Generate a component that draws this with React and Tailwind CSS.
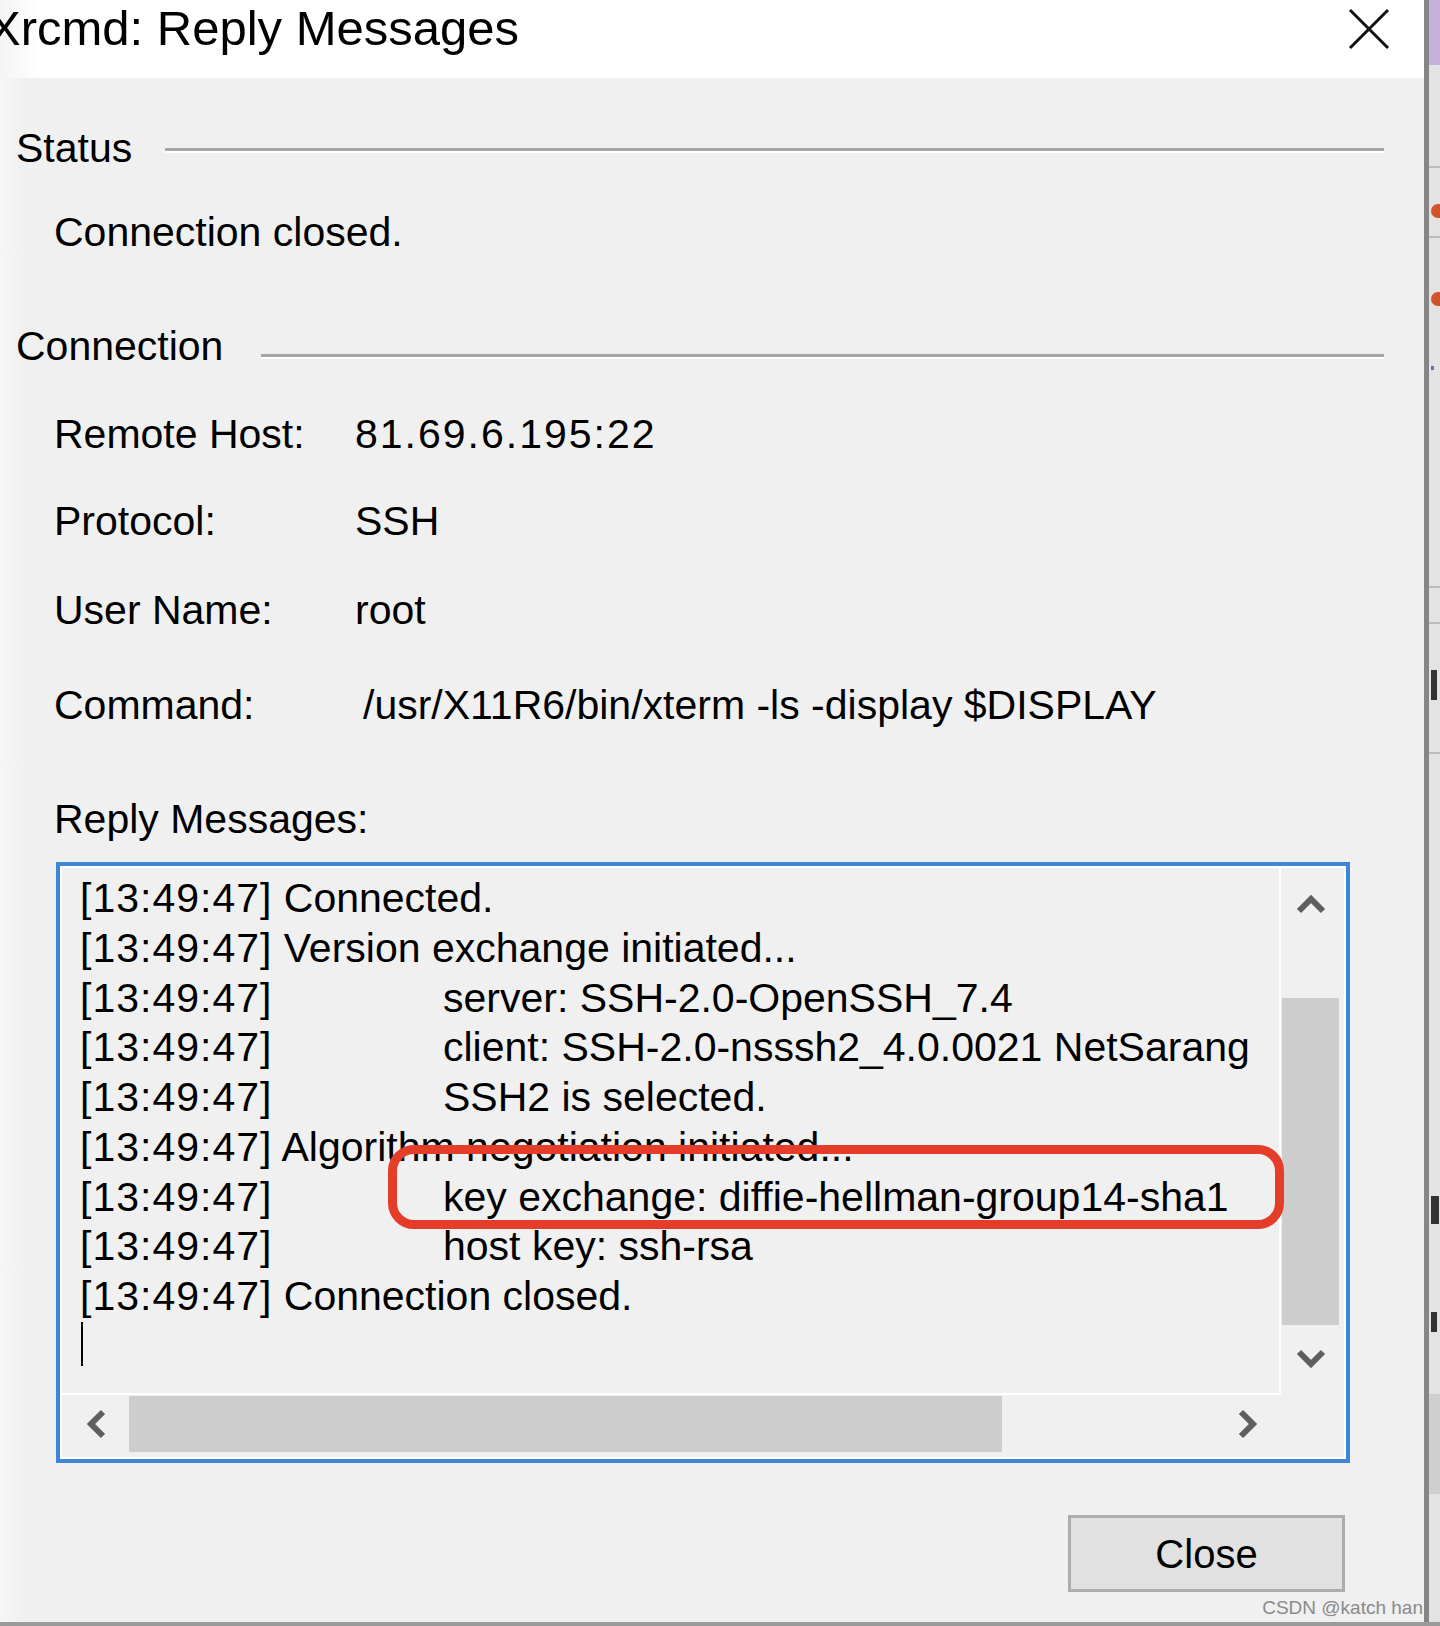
import React from "react";

const lines = [
  [false, "Connected."],
  [false, "Version exchange initiated..."],
  [true, "server: SSH-2.0-OpenSSH_7.4"],
  [true, "client: SSH-2.0-nsssh2_4.0.0021 NetSarang"],
  [true, "SSH2 is selected."],
  [false, "Algorithm negotiation initiated..."],
  [true, "key exchange: diffie-hellman-group14-sha1"],
  [true, "host key: ssh-rsa"],
  [false, "Connection closed."],
];

function Chevron({ dir }) {
  if (dir === "up")
    return (
      <svg width="30" height="24" viewBox="0 0 30 24">
        <path d="M3 20 L15 8 L27 20" fill="none" stroke="#5f5f5f" strokeWidth="6" />
      </svg>
    );
  if (dir === "down")
    return (
      <svg width="30" height="24" viewBox="0 0 30 24">
        <path d="M3 4 L15 16 L27 4" fill="none" stroke="#5f5f5f" strokeWidth="6" />
      </svg>
    );
  if (dir === "left")
    return (
      <svg width="26" height="30" viewBox="0 0 26 30">
        <path d="M20 3 L8 15 L20 27" fill="none" stroke="#5f5f5f" strokeWidth="6" />
      </svg>
    );
  return (
    <svg width="26" height="30" viewBox="0 0 26 30">
      <path d="M6 3 L18 15 L6 27" fill="none" stroke="#5f5f5f" strokeWidth="6" />
    </svg>
  );
}

export default function App() {
  return (
    <div className="relative flex h-[1626px] w-[1440px] overflow-hidden bg-[#9a9a9a] font-['Liberation_Sans',Arial,sans-serif] text-black">
      {/* Dialog */}
      <div className="flex h-[1622px] w-[1424px] flex-col">
        {/* Title bar */}
        <div className="flex h-[78px] shrink-0 items-start justify-between bg-[linear-gradient(to_right,#f4f4f4_0px,#ffffff_40px)]">
          <div className="ml-[-12px] whitespace-nowrap text-[49px] leading-[56px]">Xrcmd: Reply Messages</div>
          <div className="mr-[34px] mt-[8px]">
            <svg width="42" height="42" viewBox="0 0 42 42">
              <path d="M2 2 L40 40 M40 2 L2 40" stroke="#111111" strokeWidth="3" fill="none" />
            </svg>
          </div>
        </div>

        {/* Body */}
        <div className="flex flex-1 flex-col bg-[linear-gradient(to_right,#f6f6f6_0px,#f0f0f0_24px)] text-[41px] leading-[40px]">
          {/* Status header */}
          <div className="mt-[50px] flex h-[40px] items-center pl-[16px]">
            <span>Status</span>
            <div className="mr-[40px] ml-[33px] mt-[4px] flex-1 border-t-[3px] border-b-2 border-t-[#a6a6a6] border-b-white" />
          </div>
          <div className="mt-[44px] flex h-[40px] items-center pl-[54px]">Connection closed.</div>

          {/* Connection header */}
          <div className="mt-[74px] flex h-[40px] items-center pl-[16px]">
            <span>Connection</span>
            <div className="mr-[40px] ml-[38px] mt-[20px] flex-1 border-t-[3px] border-b-2 border-t-[#a6a6a6] border-b-white" />
          </div>

          <div className="mt-[48px] flex h-[40px] items-center pl-[54px]">
            <span className="w-[301px]">Remote Host:</span>
            <span className="tracking-[2px]">81.69.6.195:22</span>
          </div>
          <div className="mt-[47px] flex h-[40px] items-center pl-[54px]">
            <span className="w-[301px]">Protocol:</span>
            <span>SSH</span>
          </div>
          <div className="mt-[49px] flex h-[40px] items-center pl-[54px]">
            <span className="w-[301px]">User Name:</span>
            <span>root</span>
          </div>
          <div className="mt-[55px] flex h-[40px] items-center pl-[54px]">
            <span className="w-[309px]">Command:</span>
            <span className="whitespace-nowrap">/usr/X11R6/bin/xterm -ls -display $DISPLAY</span>
          </div>

          <div className="mt-[74px] flex h-[40px] items-center pl-[54px]">Reply Messages:</div>

          {/* Log box */}
          <div className="relative ml-[56px] mt-[23px] h-[601px] w-[1294px] border-4 border-[#3f86d6] bg-white p-[2px]">
            <div className="grid h-full w-full grid-cols-[1219px_1fr] grid-rows-[527px_1fr] bg-[#f0f0f0]">
              {/* text area */}
              <div className="overflow-hidden border-r-2 border-b-2 border-white pl-[18px] pt-[6px] text-[41px] leading-[49.75px]">
                {lines.map(([indent, text], i) => (
                  <div key={i} className="whitespace-nowrap">
                    {indent ? (
                      <>
                        <span className="inline-block w-[363px] tracking-[1px]">[13:49:47]</span>
                        <span>{text}</span>
                      </>
                    ) : (
                      <>
                        <span className="tracking-[1px]">[13:49:47]</span>
                        <span>{" " + text}</span>
                      </>
                    )}
                  </div>
                ))}
                <div className="ml-[1px] h-[44px] w-[2px] bg-black" />
              </div>

              {/* vertical scrollbar */}
              <div className="flex flex-col">
                <div className="flex h-[70px] items-center justify-center pr-[4px]">
                  <Chevron dir="up" />
                </div>
                <div className="h-[60px]" />
                <div className="ml-[1px] mr-[5px] h-[327px] bg-[#cdcdcd]" />
                <div className="flex h-[70px] items-center justify-center pr-[4px]">
                  <Chevron dir="down" />
                </div>
              </div>

              {/* horizontal scrollbar */}
              <div className="flex items-start pt-[1px]">
                <div className="flex h-[56px] w-[67px] items-center justify-center">
                  <Chevron dir="left" />
                </div>
                <div className="h-[56px] w-[873px] bg-[#cdcdcd]" />
                <div className="flex-1" />
                <div className="flex h-[56px] w-[67px] items-center justify-center">
                  <Chevron dir="right" />
                </div>
              </div>
              <div />
            </div>

            {/* red annotation */}
            <div className="absolute left-[328px] top-[279px] h-[84px] w-[896px] rounded-[26px] border-[9px] border-[#e43d2a]" />
          </div>

          {/* Close button */}
          <div className="mr-[79px] mt-[52px] flex h-[77px] w-[277px] items-center justify-center self-end border-[3px] border-[#adadad] bg-[#e1e1e1] text-[40px]">
            Close
          </div>
        </div>
      </div>

      {/* Background window strip */}
      <div className="relative h-[1622px] w-[16px] border-l-[5px] border-[#868686] bg-[#e3e3e3]">
        <div className="h-[65px] bg-[#c6b0dc]" />
        <div className="absolute left-0 right-0 top-[166px] h-[2px] bg-[#bdbdbd]" />
        <div className="absolute left-[2px] top-[204px] h-[14px] w-[9px] rounded-l-full bg-[#d2532b]" />
        <div className="absolute left-0 right-0 top-[236px] h-[2px] bg-[#bdbdbd]" />
        <div className="absolute left-[2px] top-[292px] h-[14px] w-[9px] rounded-l-full bg-[#d2532b]" />
        <div className="absolute left-[2px] top-[366px] h-[4px] w-[3px] bg-[#5a78b8]" />
        <div className="absolute left-0 right-0 top-[586px] h-[2px] bg-[#bdbdbd]" />
        <div className="absolute left-0 right-0 top-[622px] h-[2px] bg-[#bdbdbd]" />
        <div className="absolute left-[2px] top-[670px] h-[30px] w-[6px] bg-[#333333]" />
        <div className="absolute left-0 right-0 top-[752px] h-[2px] bg-[#bdbdbd]" />
        <div className="absolute left-[2px] top-[1196px] h-[28px] w-[8px] bg-[#333333]" />
        <div className="absolute left-[2px] top-[1312px] h-[20px] w-[6px] bg-[#333333]" />
        <div className="absolute left-0 right-0 top-[1394px] h-[100px] bg-[#cfcfcf]" />
      </div>

      {/* watermark */}
      <div className="absolute right-[17px] top-[1597px] whitespace-nowrap text-[19px] leading-[22px] text-[#8a8a8a]">
        CSDN @katch han
      </div>
    </div>
  );
}
